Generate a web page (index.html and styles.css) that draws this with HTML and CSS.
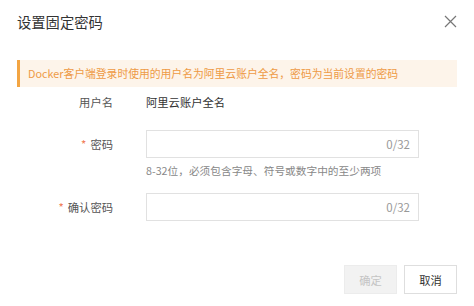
FILE: index.html
```html
<!DOCTYPE html>
<html lang="zh-CN">
<head>
    <meta charset="UTF-8">
    <meta name="viewport" content="width=device-width, initial-scale=1.0">
    <title>设置固定密码</title>
    <link rel="stylesheet" href="styles.css">
</head>
<body>
    <div class="dialog">
        <div class="dialog-header">
            <span class="dialog-title">设置固定密码</span>
            <span class="dialog-close">
                <svg width="13" height="13" viewBox="0 0 13 13">
                    <path d="M1 1 L12 12 M12 1 L1 12" stroke="#777" stroke-width="1.2" fill="none"/>
                </svg>
            </span>
        </div>

        <div class="alert">Docker客户端登录时使用的用户名为阿里云账户全名，密码为当前设置的密码</div>

        <div class="form">
            <div class="form-item">
                <div class="form-label">用户名</div>
                <div class="form-control">
                    <div class="form-text">阿里云账户全名</div>
                </div>
            </div>
            <div class="form-item">
                <div class="form-label"><span class="required">*</span>密码</div>
                <div class="form-control">
                    <div class="input">
                        <input type="password">
                        <span class="counter">0/32</span>
                    </div>
                    <div class="help">8-32位，必须包含字母、符号或数字中的至少两项</div>
                </div>
            </div>
            <div class="form-item">
                <div class="form-label"><span class="required">*</span>确认密码</div>
                <div class="form-control">
                    <div class="input">
                        <input type="password">
                        <span class="counter">0/32</span>
                    </div>
                </div>
            </div>
        </div>

        <div class="dialog-footer">
            <button class="btn btn-disabled" disabled>确定</button>
            <button class="btn">取消</button>
        </div>
    </div>
</body>
</html>
```

FILE: styles.css
```css
body {
    margin: 0;
    padding: 0;
    background: #fff;
    color: #333;
    font-family: "Noto Sans CJK SC", "Noto Sans", sans-serif;
}

.dialog {
    width: 474px;
    height: 306px;
    padding: 0 17px;
    box-sizing: border-box;
}

.dialog-header {
    display: flex;
    justify-content: space-between;
    align-items: center;
    padding-top: 12px;
    height: 20px;
}

.dialog-title {
    font-size: 14.3px;
    line-height: 20px;
    color: #333;
}

.dialog-close {
    display: flex;
    width: 13px;
    height: 13px;
    margin-top: -1px;
}

.alert {
    margin-top: 28px;
    height: 27px;
    line-height: 27px;
    border-left: 3px solid #f3a543;
    background: #fdf4ea;
    padding-left: 8px;
    font-size: 10.8px;
    color: #ee9a45;
    white-space: nowrap;
}

.form {
    margin-top: 1px;
}

.form-item {
    display: flex;
    margin-bottom: 14px;
}

.form-item:last-child {
    margin-bottom: 0;
}

.form-label {
    width: 96px;
    margin-right: 33px;
    height: 28px;
    line-height: 28px;
    text-align: right;
    font-size: 11.3px;
    color: #555;
}

.required {
    color: #f07a55;
    margin-right: 4px;
}

.form-text {
    height: 28px;
    line-height: 28px;
    font-size: 11.3px;
    color: #333;
}

.input {
    display: flex;
    align-items: center;
    width: 273px;
    height: 28px;
    box-sizing: border-box;
    border: 1px solid #e1e1e1;
    background: #fff;
}

.input input {
    flex: 1;
    min-width: 0;
    border: none;
    outline: none;
    background: transparent;
    height: 100%;
    padding: 0 8px;
}

.counter {
    padding-right: 8px;
    font-size: 11.5px;
    color: #999;
}

.help {
    margin-top: 5px;
    line-height: 16px;
    font-size: 10.7px;
    color: #888;
}

.dialog-footer {
    display: flex;
    justify-content: flex-end;
    gap: 7px;
    margin-top: 44px;
}

.btn {
    width: 53px;
    height: 29px;
    border: 1px solid #dedede;
    background: #fff;
    color: #333;
    font-family: inherit;
    font-size: 11.3px;
    padding: 0;
    cursor: pointer;
}

.btn-disabled {
    background: #f2f2f2;
    border-color: #ececec;
    color: #c4c4c4;
    cursor: not-allowed;
}
```
